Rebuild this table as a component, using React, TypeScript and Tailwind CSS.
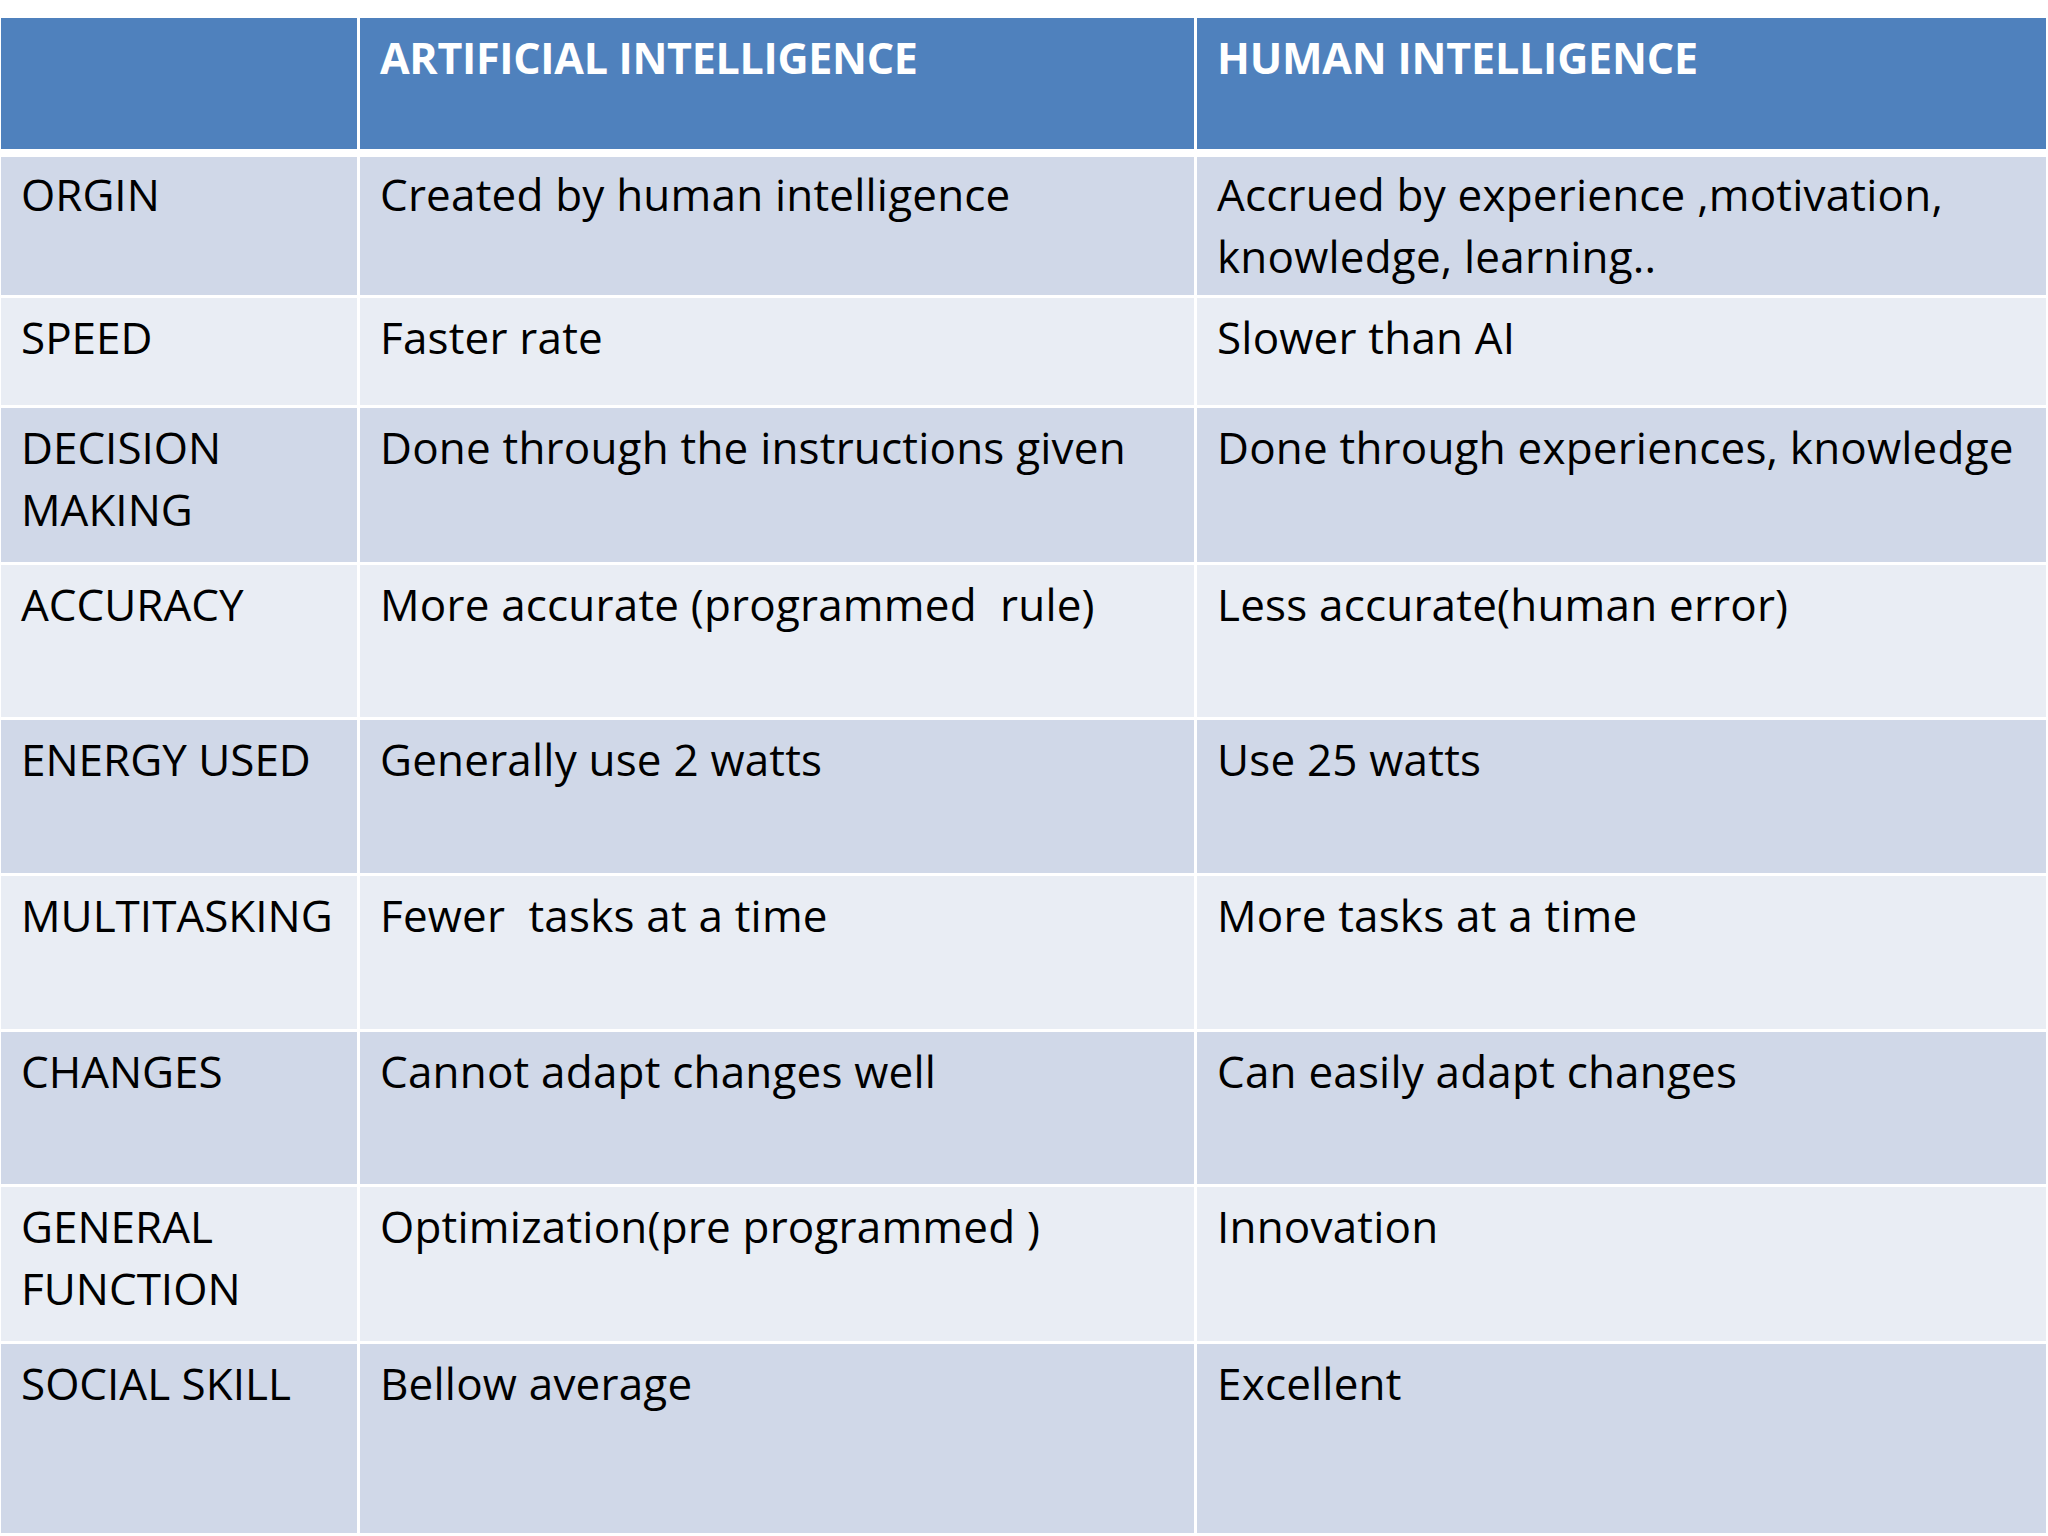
type Row = {
  label: string
  ai: string
  human: string
  h: string
  bg: string
  pt: string
}

const rows: Row[] = [
  {
    label: "ORGIN",
    ai: "Created by human intelligence",
    human: "Accrued by experience ,motivation,\nknowledge, learning..",
    h: "h-[138px]",
    bg: "bg-[#d0d8e8]",
    pt: "pt-[7px]",
  },
  { label: "SPEED", ai: "Faster rate", human: "Slower than AI", h: "h-[107px]", bg: "bg-[#e9edf4]", pt: "pt-[9px]" },
  {
    label: "DECISION\nMAKING",
    ai: "Done through the instructions given",
    human: "Done through experiences, knowledge",
    h: "h-[154px]",
    bg: "bg-[#d0d8e8]",
    pt: "pt-[9px]",
  },
  {
    label: "ACCURACY",
    ai: "More accurate (programmed  rule)",
    human: "Less accurate(human error)",
    h: "h-[152px]",
    bg: "bg-[#e9edf4]",
    pt: "pt-[9px]",
  },
  {
    label: "ENERGY USED",
    ai: "Generally use 2 watts",
    human: "Use 25 watts",
    h: "h-[153px]",
    bg: "bg-[#d0d8e8]",
    pt: "pt-[9px]",
  },
  {
    label: "MULTITASKING",
    ai: "Fewer  tasks at a time",
    human: "More tasks at a time",
    h: "h-[153px]",
    bg: "bg-[#e9edf4]",
    pt: "pt-[9px]",
  },
  {
    label: "CHANGES",
    ai: "Cannot adapt changes well",
    human: "Can easily adapt changes",
    h: "h-[152px]",
    bg: "bg-[#d0d8e8]",
    pt: "pt-[9px]",
  },
  {
    label: "GENERAL\nFUNCTION",
    ai: "Optimization(pre programmed )",
    human: "Innovation",
    h: "h-[154px]",
    bg: "bg-[#e9edf4]",
    pt: "pt-[9px]",
  },
  {
    label: "SOCIAL SKILL",
    ai: "Bellow average",
    human: "Excellent",
    h: "h-[189px]",
    bg: "bg-[#d0d8e8]",
    pt: "pt-[9px]",
  },
]

const cols = "grid grid-cols-[356px_834px_849px] gap-x-[3px]"

export default function App() {
  return (
    <div className="min-h-screen bg-white pt-[18px] pl-[1px] font-['Open_Sans',sans-serif]">
      {/* header */}
      <div className={`${cols} h-[131px]`}>
        <div className="bg-[#4f81bd]" />
        <div className="bg-[#4f81bd] pl-[20px] pt-[9px] text-[43px] font-bold leading-[61.5px] tracking-[-0.3px] text-white">
          ARTIFICIAL INTELLIGENCE
        </div>
        <div className="bg-[#4f81bd] pl-[20px] pt-[9px] text-[43px] font-bold leading-[61.5px] tracking-[-0.2px] text-white">
          HUMAN INTELLIGENCE
        </div>
      </div>

      <div className="mt-[8px] flex flex-col gap-y-[3px] text-[44px] leading-[61.5px] tracking-[0.2px] text-black">
        {rows.map((r) => (
          <div key={r.label} className={`${cols} ${r.h}`}>
            <div className={`${r.bg} ${r.pt} pl-[20px] whitespace-pre tracking-normal`}>{r.label}</div>
            <div className={`${r.bg} ${r.pt} pl-[20px] whitespace-pre`}>{r.ai}</div>
            <div className={`${r.bg} ${r.pt} pl-[20px] whitespace-pre`}>{r.human}</div>
          </div>
        ))}
      </div>
    </div>
  )
}
